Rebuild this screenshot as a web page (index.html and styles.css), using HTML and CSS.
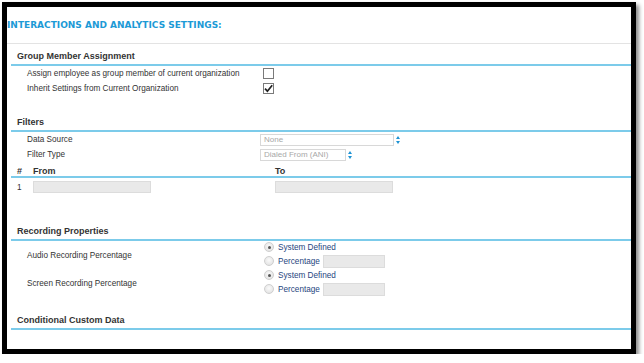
FILE: index.html
```html
<!DOCTYPE html>
<html lang="en">

<head>
  <meta charset="UTF-8">
  <title>Interactions and Analytics Settings</title>
  <link rel="stylesheet" href="styles.css">
</head>

<body>
  <div class="frame">
    <div class="page-title">INTERACTIONS AND ANALYTICS SETTINGS:</div>

    <div class="section section-group">
      <h2 class="section-head">Group Member Assignment</h2>
      <div class="field-row">
        <span class="field-label">Assign employee as group member of current organization</span>
        <span class="checkbox"></span>
      </div>
      <div class="field-row">
        <span class="field-label">Inherit Settings from Current Organization</span>
        <span class="checkbox checked">
          <svg width="9" height="9" viewBox="0 0 9 9"><path d="M1 4.6 L3.4 7.2 L8.2 1.2" fill="none" stroke="#222" stroke-width="1.7"/></svg>
        </span>
      </div>
    </div>

    <div class="section section-filters">
      <h2 class="section-head">Filters</h2>
      <div class="field-row">
        <span class="field-label">Data Source</span>
        <span class="select-wrap">
          <span class="select select-wide">None</span>
          <span class="spinner"></span>
        </span>
      </div>
      <div class="field-row">
        <span class="field-label">Filter Type</span>
        <span class="select-wrap">
          <span class="select select-narrow">Dialed From (ANI)</span>
          <span class="spinner"></span>
        </span>
      </div>
      <div class="table-head">
        <span>#</span>
        <span>From</span>
        <span>To</span>
      </div>
      <div class="table-row">
        <span>1</span>
        <span class="text-box"></span>
        <span class="text-box"></span>
      </div>
    </div>

    <div class="section section-recording">
      <h2 class="section-head">Recording Properties</h2>
      <div class="radio-field">
        <span class="field-label">Audio Recording Percentage</span>
        <div class="radio-options">
          <div class="radio-option first"><span class="radio checked"></span>System Defined</div>
          <div class="radio-option"><span class="radio"></span>Percentage<span class="text-box pct-box"></span></div>
        </div>
      </div>
      <div class="radio-field">
        <span class="field-label">Screen Recording Percentage</span>
        <div class="radio-options">
          <div class="radio-option first"><span class="radio checked"></span>System Defined</div>
          <div class="radio-option"><span class="radio"></span>Percentage<span class="text-box pct-box"></span></div>
        </div>
      </div>
    </div>

    <div class="section section-custom">
      <h2 class="section-head">Conditional Custom Data</h2>
    </div>
  </div>
</body>

</html>
```

FILE: styles.css
```css
* {
  margin: 0;
  padding: 0;
  box-sizing: border-box;
}

body {
  font-family: 'Liberation Sans', Arial, sans-serif;
  background-color: #fff;
  color: #333;
}

.frame {
  box-sizing: content-box;
  width: 624px;
  height: 342px;
  margin: 2px 0 0 2px;
  border: 5px solid #000;
  box-shadow: 3px 3px 4px rgba(0, 0, 0, 0.45);
  overflow: hidden;
}

.page-title {
  font-family: 'DejaVu Sans', Verdana, sans-serif;
  font-weight: bold;
  font-size: 9px;
  color: #1c9ad6;
  line-height: 36px;
  height: 37px;
  border-bottom: 1px solid #e3e3e3;
}

.section {
  margin-left: 4px;
}

.section-filters {
  margin-top: 14px;
}

.section-recording {
  margin-top: 25px;
}

.section-custom {
  margin-top: 11px;
}

.section-head {
  font-size: 9px;
  font-weight: bold;
  color: #333;
  line-height: 16px;
  padding: 4px 0 0 6px;
  border-bottom: 2px solid #7ccbea;
}

.field-row {
  display: grid;
  grid-template-columns: 233px auto;
  align-items: center;
  height: 15px;
  padding-left: 16px;
}

.field-label {
  font-size: 8.2px;
  color: #333;
}

.checkbox {
  display: flex;
  align-items: center;
  justify-content: center;
  width: 11px;
  height: 11px;
  margin-left: 3px;
  border: 1px solid #7a7a7a;
  background-color: #fff;
}

.select-wrap {
  display: flex;
  align-items: center;
}

.select {
  height: 12px;
  line-height: 10px;
  padding-left: 3px;
  font-size: 8px;
  color: #a8a8a8;
  border: 1px solid #d8d8d8;
  background-color: #fff;
}

.select-wide {
  width: 134px;
}

.select-narrow {
  width: 86px;
}

.spinner {
  position: relative;
  width: 5px;
  height: 8px;
  margin-left: 2px;
}

.spinner:before,
.spinner:after {
  position: absolute;
  content: "";
  left: 0;
  border-left: 2.5px solid transparent;
  border-right: 2.5px solid transparent;
}

.spinner:before {
  top: 0;
  border-bottom: 3px solid #1e93d4;
}

.spinner:after {
  bottom: 0;
  border-top: 3px solid #1e93d4;
}

.table-head,
.table-row {
  display: grid;
  grid-template-columns: 16px 242px auto;
  align-items: center;
  padding-left: 6px;
}

.table-head {
  height: 16px;
  padding-top: 3px;
  font-size: 9px;
  font-weight: bold;
  border-bottom: 2px solid #7ccbea;
}

.table-row {
  height: 16px;
  padding-top: 2px;
  font-size: 8.2px;
}

.text-box {
  display: block;
  width: 118px;
  height: 12px;
  border: 1px solid #dcdcdc;
  background-color: #e9e9e9;
}

.radio-field {
  display: grid;
  grid-template-columns: 237px auto;
  align-items: center;
  padding-left: 16px;
}

.radio-option {
  display: flex;
  align-items: center;
  height: 16px;
  font-size: 8.2px;
  color: #1f4680;
}

.radio-option.first {
  height: 12px;
}

.radio {
  position: relative;
  width: 10px;
  height: 10px;
  margin-right: 4px;
  border: 1px solid #cfcfcf;
  border-radius: 50%;
  background: radial-gradient(circle at 50% 40%, #fafafa, #dedede);
}

.radio.checked:before {
  position: absolute;
  content: "";
  left: 2.5px;
  top: 2.5px;
  width: 3px;
  height: 3px;
  border-radius: 50%;
  background-color: #555;
}

.pct-box {
  width: 62px;
  height: 13px;
  margin-left: 3px;
}
```
